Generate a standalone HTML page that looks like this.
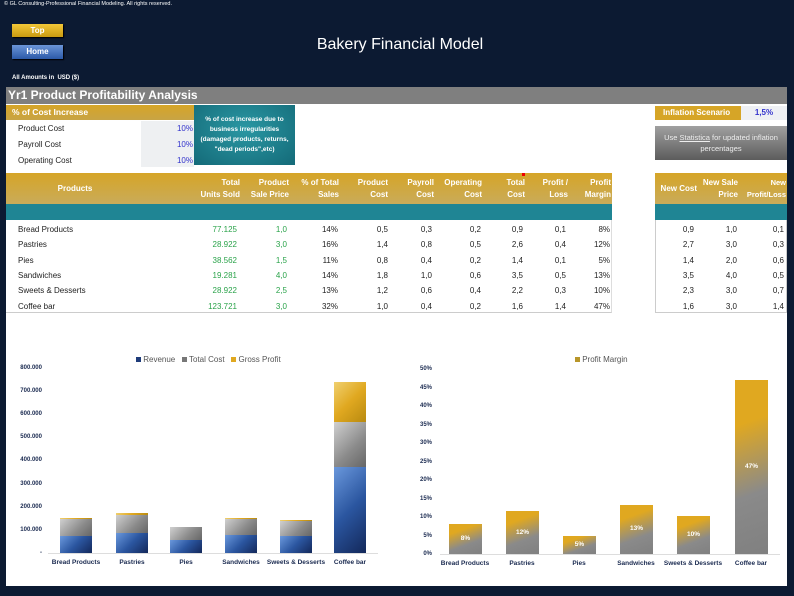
<!DOCTYPE html>
<html><head><meta charset="utf-8"><style>
*{margin:0;padding:0;box-sizing:border-box}
body{width:794px;height:596px;background:#0c1a32;font-family:"Liberation Sans",sans-serif;position:relative;overflow:hidden}
.a{position:absolute}
.w{background:#fff}
.t{font-size:8px;color:#222;white-space:nowrap}
.r{text-align:right}
.hd{font-size:8px;font-weight:bold;color:#fff;text-align:right;line-height:12px;white-space:nowrap}
.g{color:#2aa34a}
.yl{font-size:6px;font-weight:bold;color:#1a2a50;text-align:right;width:32px}
.xl{font-size:6.5px;font-weight:bold;color:#1a2a50;text-align:center;width:70px}
</style></head><body>
<div class="a" style="left:4px;top:1px;font-size:5.5px;color:#fff">© GL Consulting-Professional Financial Modeling. All rights reserved.</div>
<div class="a" style="left:12px;top:24px;width:51px;height:13px;background:linear-gradient(#f3c737,#c99a10);color:#fff;font-size:8px;font-weight:bold;text-align:center;line-height:13px;box-shadow:1px 1px 1px #000">Top</div>
<div class="a" style="left:12px;top:45px;width:51px;height:14px;background:linear-gradient(#6b95d8,#2c5aa8);color:#fff;font-size:8px;font-weight:bold;text-align:center;line-height:14px;box-shadow:1px 1px 1px #000">Home</div>
<div class="a" style="left:250px;top:36px;width:300px;text-align:center;color:#fff;font-size:16px">Bakery Financial Model</div>
<div class="a" style="left:12px;top:75px;color:#fff;font-size:6px;font-weight:bold">All Amounts in &nbsp;USD ($)</div>
<div class="a w" style="left:6px;top:87px;width:781px;height:499px"></div>
<div class="a" style="left:6px;top:87px;width:781px;height:17px;background:#7f7f7f;color:#fff;font-size:12px;font-weight:bold;line-height:17px;padding-left:2px">Yr1 Product Profitability Analysis</div>
<div class="a" style="left:6px;top:105px;width:188px;height:15px;background:linear-gradient(#d6a527,#c8a445);color:#fff;font-size:8.5px;font-weight:bold;line-height:15px;padding-left:6px">% of Cost Increase</div>
<div class="a" style="left:141px;top:121px;width:53px;height:46px;background:#eef0f2"></div>
<div class="a t" style="left:18px;top:124px">Product Cost</div>
<div class="a t" style="left:18px;top:140px">Payroll Cost</div>
<div class="a t" style="left:18px;top:156px">Operating Cost</div>
<div class="a t r" style="left:150px;top:124px;width:43px;color:#3333cc">10%</div>
<div class="a t r" style="left:150px;top:140px;width:43px;color:#3333cc">10%</div>
<div class="a t r" style="left:150px;top:156px;width:43px;color:#3333cc">10%</div>
<div class="a" style="left:194px;top:105px;width:101px;height:60px;background:radial-gradient(ellipse at 50% 40%,#2a97a3,#146a78);color:#fff;font-size:6.5px;font-weight:bold;text-align:center;line-height:10px;padding-top:10px">% of cost increase due to<br>business irregularities<br>(damaged products, returns,<br>"dead periods",etc)</div>
<div class="a" style="left:655px;top:106px;width:86px;height:14px;background:#d6a527;color:#fff;font-size:8px;font-weight:bold;line-height:14px;padding-left:8px">Inflation Scenario</div>
<div class="a" style="left:741px;top:106px;width:46px;height:14px;background:#eef0f4;color:#3333cc;font-size:8px;font-weight:bold;line-height:14px;text-align:center">1,5%</div>
<div class="a" style="left:655px;top:126px;width:132px;height:34px;background:linear-gradient(#a0a0a0,#5c5c5c);color:#eee;font-size:7.5px;text-align:center;line-height:11px;padding-top:6px">Use <u>Statistica</u> for updated inflation<br>percentages</div>
<div class="a" style="left:6px;top:173px;width:606px;height:31px;background:linear-gradient(#d6a527,#c9ab5a)"></div>
<div class="a" style="left:6px;top:204px;width:606px;height:16px;background:#1f8594"></div>
<div class="a" style="left:655px;top:173px;width:132px;height:31px;background:linear-gradient(#d6a527,#c9ab5a)"></div>
<div class="a" style="left:655px;top:204px;width:132px;height:16px;background:#1f8594"></div>
<div class="a" style="left:6px;top:220px;width:606px;height:93px;border-bottom:1px solid #ccc;border-right:1px solid #ddd"></div>
<div class="a" style="left:655px;top:220px;width:132px;height:93px;border:1px solid #ccc;border-top:none"></div>
<div class="a hd" style="left:40px;top:183px;width:70px;text-align:center">Products</div>
<div class="a hd" style="left:190px;top:177px;width:50px">Total<br>Units Sold</div>
<div class="a hd" style="left:239px;top:177px;width:50px">Product<br>Sale Price</div>
<div class="a hd" style="left:289px;top:177px;width:50px">% of Total<br>Sales</div>
<div class="a hd" style="left:338px;top:177px;width:50px">Product<br>Cost</div>
<div class="a hd" style="left:384px;top:177px;width:50px">Payroll<br>Cost</div>
<div class="a hd" style="left:432px;top:177px;width:50px">Operating<br>Cost</div>
<div class="a hd" style="left:475px;top:177px;width:50px">Total<br>Cost</div>
<div class="a hd" style="left:518px;top:177px;width:50px">Profit /<br>Loss</div>
<div class="a hd" style="left:561px;top:177px;width:50px">Profit<br>Margin</div>
<div class="a hd" style="left:655px;top:183px;width:42px">New Cost</div>
<div class="a hd" style="left:688px;top:177px;width:50px">New Sale<br>Price</div>
<div class="a hd" style="left:735px;top:177px;width:51px;font-size:7.5px">New<br>Profit/Loss</div>
<div class="a" style="left:522px;top:173px;width:3px;height:3px;background:#e00"></div>
<div id="rows"></div>
<script>
var d=[["Bread Products","77.125","1,0","14%","0,5","0,3","0,2","0,9","0,1","8%","0,9","1,0","0,1"],
["Pastries","28.922","3,0","16%","1,4","0,8","0,5","2,6","0,4","12%","2,7","3,0","0,3"],
["Pies","38.562","1,5","11%","0,8","0,4","0,2","1,4","0,1","5%","1,4","2,0","0,6"],
["Sandwiches","19.281","4,0","14%","1,8","1,0","0,6","3,5","0,5","13%","3,5","4,0","0,5"],
["Sweets & Desserts","28.922","2,5","13%","1,2","0,6","0,4","2,2","0,3","10%","2,3","3,0","0,7"],
["Coffee bar","123.721","3,0","32%","1,0","0,4","0,2","1,6","1,4","47%","1,6","3,0","1,4"]];
var rx=[237,287,338,388,432,481,523,566,610,694,737,784],h="";
d.forEach(function(r,i){var y=225+i*15.3;
h+='<div class="a t" style="left:18px;top:'+y+'px">'+r[0].replace("&","&amp;")+'</div>';
for(var j=1;j<13;j++){h+='<div class="a t r'+(j<3?' g':'')+'" style="left:'+(rx[j-1]-50)+'px;top:'+y+'px;width:50px">'+r[j]+'</div>';}});
document.getElementById("rows").innerHTML=h;
</script>
<div class="a" style="left:136px;top:355px;font-size:8px;color:#555;white-space:nowrap"><span style="display:inline-block;width:5px;height:5px;background:#1f3c7a"></span> Revenue &nbsp; <span style="display:inline-block;width:5px;height:5px;background:#777"></span> Total Cost &nbsp; <span style="display:inline-block;width:5px;height:5px;background:#e0a820"></span> Gross Profit</div>
<div id="c1"></div>
<div class="a" style="left:48px;top:553px;width:330px;height:1px;background:#ddd"></div>
<div class="a" style="left:575px;top:355px;font-size:8px;color:#555;white-space:nowrap"><span style="display:inline-block;width:5px;height:5px;background:#b8962a"></span> Profit Margin</div>
<div id="c2"></div>
<div class="a" style="left:440px;top:554px;width:340px;height:1px;background:#ddd"></div>
<script>
var names=["Bread Products","Pastries","Pies","Sandwiches","Sweets &amp; Desserts","Coffee bar"];
var s="",base=553,k=185/800;
var yl=["800.000","700.000","600.000","500.000","400.000","300.000","200.000","100.000","-"];
yl.forEach(function(t,i){s+='<div class="a yl" style="left:10px;top:'+(365+i*23.1)+'px">'+t+'</div>';});
var b=[[75,148,152],[85,165,172],[57,112,114],[76,147,152],[72,137,143],[370,565,740]];
var cx=[76,132,186,241,296,350];
b.forEach(function(v,i){var x=cx[i]-16;
var y1=base-v[0]*k,y2=base-v[1]*k,y3=base-v[2]*k;
s+='<div class="a" style="left:'+x+'px;top:'+y3+'px;width:32px;height:'+(y2-y3)+'px;background:linear-gradient(135deg,#f0d070,#e0a820 50%,#b88a10)"></div>';
s+='<div class="a" style="left:'+x+'px;top:'+y2+'px;width:32px;height:'+(y1-y2)+'px;background:linear-gradient(135deg,#d0d0d0,#8a8a8a 60%,#666)"></div>';
s+='<div class="a" style="left:'+x+'px;top:'+y1+'px;width:32px;height:'+(base-y1)+'px;background:linear-gradient(135deg,#6a98dc,#2b56a0 50%,#13285a)"></div>';
s+='<div class="a xl" style="left:'+(cx[i]-35)+'px;top:559px">'+names[i]+'</div>';});
document.getElementById("c1").innerHTML=s;
s="";var b2=554,k2=3.7;
for(var i=0;i<=10;i++){s+='<div class="a yl" style="left:400px;top:'+(366+i*18.5)+'px">'+(50-i*5)+'%</div>';}
var m=[8.2,11.6,5,13.3,10.3,47],ml=["8%","12%","5%","13%","10%","47%"];
var cx2=[465,522,579,636,693,751];
m.forEach(function(v,i){var hh=v*k2,x=cx2[i]-16;
s+='<div class="a" style="left:'+x+'px;top:'+(b2-hh)+'px;width:33px;height:'+hh+'px;background:linear-gradient(160deg,#e0a820 25%,#8a8a8a 65%,#808080)"></div>';
s+='<div class="a" style="left:'+x+'px;top:'+(b2-hh/2-4)+'px;width:33px;text-align:center;color:#fff;font-size:6.5px;font-weight:bold">'+ml[i]+'</div>';
s+='<div class="a xl" style="left:'+(cx2[i]-35)+'px;top:560px">'+names[i]+'</div>';});
document.getElementById("c2").innerHTML=s;
</script>
</body></html>
